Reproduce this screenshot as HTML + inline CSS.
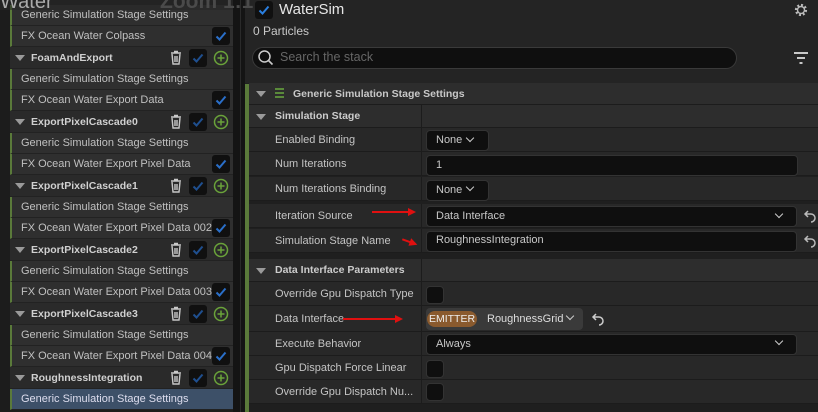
<!DOCTYPE html><html><head><style>
*{margin:0;padding:0;box-sizing:border-box}
body{width:818px;height:412px;overflow:hidden;background:#242424;font-family:"Liberation Sans",sans-serif;font-size:11px;color:#c0c0c0;position:relative}
.a{position:absolute}
.lp{left:0;top:0;width:245px;height:412px;background:#1c1c1c}
.row{position:absolute;left:10px;width:223px;height:21px;line-height:21px;background:#2f2f2f;border-bottom:1px solid #222;padding-left:9px;white-space:nowrap;overflow:hidden}
.row.c{border-left:2px solid #5a7a3a}
.row.h{background:#2a2a2a;font-weight:bold;color:#d0d0d0;padding-left:21px;height:22px;line-height:22px;font-size:10.5px}
.tri{position:absolute;width:0;height:0;border-left:5px solid transparent;border-right:5px solid transparent;border-top:6px solid #9a9a9a}
.pr{position:absolute;left:249px;width:569px;height:24px;border-bottom:1px solid #1c1c1c;background:#282828}
.pr .l{position:absolute;left:26px;top:0;line-height:24px;color:#c4c4c4;white-space:nowrap}
.pr .d{position:absolute;left:172px;top:0;width:1px;height:100%;background:#1c1c1c}
.inp{position:absolute;background:#0f0f0f;border:1px solid #333;border-radius:4px;height:21px;line-height:19px;padding-left:9px;color:#c8c8c8}
.chev{position:absolute;width:6px;height:6px;border-right:1.6px solid #ccc;border-bottom:1.6px solid #ccc;transform:rotate(45deg)}
.arr{position:absolute;height:2px;background:#e01010}
.arr:after{content:"";position:absolute;right:-6px;top:-3px;border-left:8px solid #e01010;border-top:4px solid transparent;border-bottom:4px solid transparent}
</style></head><body>
<div class="a lp"></div>
<div class="a" style="left:233px;top:0;width:12px;height:412px;background:#141414"></div>
<div class="a" style="left:240px;top:0;width:1px;height:412px;background:#2a2a2a"></div>

<div class="row c" style="top:5px">Generic Simulation Stage Settings</div>
<div class="row c" style="top:26px">FX Ocean Water Colpass</div>

<div class="row h" style="top:47px"><span class="tri" style="left:5px;top:8px"></span>FoamAndExport</div>
<div class="row c" style="top:69px">Generic Simulation Stage Settings</div>
<div class="row c" style="top:90px">FX Ocean Water Export Data</div>
<div class="row h" style="top:111px"><span class="tri" style="left:5px;top:8px"></span>ExportPixelCascade0</div>
<div class="row c" style="top:133px">Generic Simulation Stage Settings</div>
<div class="row c" style="top:154px">FX Ocean Water Export Pixel Data</div>
<div class="row h" style="top:175px"><span class="tri" style="left:5px;top:8px"></span>ExportPixelCascade1</div>
<div class="row c" style="top:197px">Generic Simulation Stage Settings</div>
<div class="row c" style="top:218px">FX Ocean Water Export Pixel Data 002</div>
<div class="row h" style="top:239px"><span class="tri" style="left:5px;top:8px"></span>ExportPixelCascade2</div>
<div class="row c" style="top:261px">Generic Simulation Stage Settings</div>
<div class="row c" style="top:282px">FX Ocean Water Export Pixel Data 003</div>
<div class="row h" style="top:303px"><span class="tri" style="left:5px;top:8px"></span>ExportPixelCascade3</div>
<div class="row c" style="top:325px">Generic Simulation Stage Settings</div>
<div class="row c" style="top:346px">FX Ocean Water Export Pixel Data 004</div>
<div class="row h" style="top:367px"><span class="tri" style="left:5px;top:8px"></span>RoughnessIntegration</div>
<div class="row c" style="top:389px;background:#3d5068;color:#dde">Generic Simulation Stage Settings</div>

<div class="a" style="left:0;top:0;width:233px;height:10px;background:rgba(40,40,40,.6)"></div>
<div class="a" style="left:0;top:-9px;font-size:20px;color:#aaa">Water</div>
<div class="a" style="left:160px;top:-10px;font-size:21px;font-weight:bold;color:#4a4a4a">Zoom 1:1</div>

<svg class="a" style="left:0;top:0" width="245" height="412" fill="none">
<defs>
<g id="tr"><path d="M-5 -5h10M-2 -6.5h4M-4 -4l1 10h6l1-10M-1 -2v6M1 -2v6" stroke="#c8c8c8" stroke-width="1.4"/></g>
<g id="ck"><rect x="-9" y="-9" width="18" height="18" rx="3" fill="#101010"/><path d="M-4.5 0.5l3 3 6-7" stroke="#2a6fc9" stroke-width="2"/></g>
<g id="ck2"><rect x="-9" y="-9" width="18" height="18" rx="3" fill="#101010"/><path d="M-4.5 0.5l3 3 6-7" stroke="#1f4f8f" stroke-width="2"/></g>
<g id="pl"><circle r="6.5" stroke="#6aa33a" stroke-width="1.5"/><path d="M-3.5 0h7M0 -3.5v7" stroke="#6aa33a" stroke-width="1.5"/></g>
</defs>
<use href="#ck" x="221" y="36"/>
<use href="#tr" x="176" y="58"/><use href="#ck2" x="198" y="58"/><use href="#pl" x="221" y="58"/>
<use href="#ck" x="221" y="100"/>
<use href="#tr" x="176" y="122"/><use href="#ck2" x="198" y="122"/><use href="#pl" x="221" y="122"/>
<use href="#ck" x="221" y="164"/>
<use href="#tr" x="176" y="186"/><use href="#ck2" x="198" y="186"/><use href="#pl" x="221" y="186"/>
<use href="#ck" x="221" y="228"/>
<use href="#tr" x="176" y="250"/><use href="#ck2" x="198" y="250"/><use href="#pl" x="221" y="250"/>
<use href="#ck" x="221" y="292"/>
<use href="#tr" x="176" y="314"/><use href="#ck2" x="198" y="314"/><use href="#pl" x="221" y="314"/>
<use href="#ck" x="221" y="356"/>
<use href="#tr" x="176" y="378"/><use href="#ck2" x="198" y="378"/><use href="#pl" x="221" y="378"/>
</svg>

<svg class="a" style="left:255px;top:1px" width="18" height="18"><rect width="18" height="18" rx="3" fill="#101010"/><path d="M4.5 9.5l3 3 6-7" stroke="#2a7fe0" stroke-width="2" fill="none"/></svg>
<div class="a" style="left:279px;top:0;font-size:15px;color:#e6e6e6;line-height:20px">WaterSim</div>
<div class="a" style="left:253px;top:24px;font-size:12px;color:#c8c8c8">0 Particles</div>
<svg class="a" style="left:793px;top:2px" width="16" height="16"><circle cx="8" cy="8" r="5" fill="none" stroke="#bbb" stroke-width="2.2" stroke-dasharray="2 1.9"/><circle cx="8" cy="8" r="3.5" fill="none" stroke="#bbb" stroke-width="1.4"/></svg>
<div class="a" style="left:252px;top:47px;width:485px;height:22px;background:#0f0f0f;border:1px solid #3a3a3a;border-radius:11px"></div>
<svg class="a" style="left:257px;top:49px" width="18" height="18"><circle cx="7.5" cy="7.5" r="5.5" stroke="#ccc" stroke-width="1.5" fill="none"/><path d="M11.5 11.5l4 4" stroke="#ccc" stroke-width="1.6"/></svg>
<div class="a" style="left:280px;top:49px;font-size:12.5px;color:#666;line-height:17px">Search the stack</div>
<svg class="a" style="left:793px;top:51px" width="16" height="14"><path d="M1 2h14M4 7h8M6.5 12h3" stroke="#c8c8c8" stroke-width="2"/></svg>

<div class="a" style="left:245px;top:83px;width:573px;height:329px;background:#1f1f1f"></div>
<div class="a" style="left:245px;top:84px;width:4px;height:328px;background:#5a7a3a"></div>
<div class="a" style="left:249px;top:83px;width:569px;height:22px;background:#2d2d2d;border-bottom:1px solid #1c1c1c"></div>
<span class="tri a" style="left:256px;top:91px"></span>
<svg class="a" style="left:275px;top:87px" width="10" height="12"><path d="M0 2h9M0 6h9M0 10h9" stroke="#5a8a3a" stroke-width="2"/></svg>
<div class="a" style="left:293px;top:83px;line-height:22px;font-weight:bold;color:#c8c8c8;font-size:10.5px">Generic Simulation Stage Settings</div>

<div class="pr" style="top:105px;height:23px;background:#2d2d2d"><span class="tri" style="left:7px;top:9px"></span><span class="l" style="font-weight:bold;line-height:23px;color:#ccc;font-size:10.5px">Simulation Stage</span><span class="d"></span></div>
<div class="pr" style="top:128px"><span class="l">Enabled Binding</span><span class="d"></span></div>
<div class="pr" style="top:152px"><span class="l">Num Iterations</span><span class="d"></span></div>
<div class="pr" style="top:177px"><span class="l">Num Iterations Binding</span><span class="d"></span></div>
<div class="pr" style="top:204px"><span class="l">Iteration Source</span><span class="d"></span></div>
<div class="pr" style="top:229px"><span class="l">Simulation Stage Name</span><span class="d"></span></div>
<div class="pr" style="top:259px;height:23px;background:#2d2d2d"><span class="tri" style="left:7px;top:9px"></span><span class="l" style="font-weight:bold;line-height:23px;color:#ccc;font-size:10.5px">Data Interface Parameters</span><span class="d"></span></div>
<div class="pr" style="top:282px"><span class="l">Override Gpu Dispatch Type</span><span class="d"></span></div>
<div class="pr" style="top:306px;height:26px"><span class="l" style="line-height:26px">Data Interface</span><span class="d"></span></div>
<div class="pr" style="top:332px"><span class="l">Execute Behavior</span><span class="d"></span></div>
<div class="pr" style="top:356px"><span class="l">Gpu Dispatch Force Linear</span><span class="d"></span></div>
<div class="pr" style="top:380px"><span class="l">Override Gpu Dispatch Nu...</span><span class="d"></span></div>

<div class="inp" style="left:426px;top:130px;width:63px">None</div><span class="chev" style="left:467px;top:135px"></span>
<div class="inp" style="left:426px;top:155px;width:372px">1</div>
<div class="inp" style="left:426px;top:180px;width:63px">None</div><span class="chev" style="left:467px;top:184px"></span>
<div class="inp" style="left:426px;top:206px;width:371px">Data Interface</div><span class="chev" style="left:776px;top:211px"></span>
<svg class="a" style="left:803px;top:209px" width="14" height="14"><path d="M5 2L2 5l3 3M2 5h6a4 4 0 0 1 0 8" stroke="#bbb" stroke-width="1.5" fill="none"/></svg>
<div class="inp" style="left:426px;top:231px;width:371px;line-height:17px">RoughnessIntegration</div>
<svg class="a" style="left:803px;top:234px" width="14" height="14"><path d="M5 2L2 5l3 3M2 5h6a4 4 0 0 1 0 8" stroke="#bbb" stroke-width="1.5" fill="none"/></svg>
<div class="inp" style="left:426px;top:286px;width:18px;height:18px"></div>
<div class="a" style="left:426px;top:308px;width:157px;height:22px;background:#3a3a3a;border-radius:4px"></div>
<div class="a" style="left:427px;top:311px;width:50px;height:16px;background:#8a5a2e;border-radius:8px;color:#eee;line-height:16px;text-align:center;font-size:10.5px">EMITTER</div>
<div class="a" style="left:487px;top:308px;line-height:22px;color:#ddd">RoughnessGrid</div><span class="chev" style="left:567px;top:313px"></span>
<svg class="a" style="left:591px;top:312px" width="14" height="14"><path d="M5 2L2 5l3 3M2 5h6a4 4 0 0 1 0 8" stroke="#ccc" stroke-width="1.5" fill="none"/></svg>
<div class="inp" style="left:426px;top:334px;width:371px">Always</div><span class="chev" style="left:776px;top:338px"></span>
<div class="inp" style="left:426px;top:360px;width:18px;height:18px"></div>
<div class="inp" style="left:426px;top:383px;width:18px;height:18px"></div>

<div class="arr" style="left:372px;top:211px;width:38px"></div>
<div class="arr" style="left:402px;top:240px;width:10px;transform:rotate(20deg)"></div>
<div class="arr" style="left:343px;top:318px;width:54px"></div>
</body></html>
